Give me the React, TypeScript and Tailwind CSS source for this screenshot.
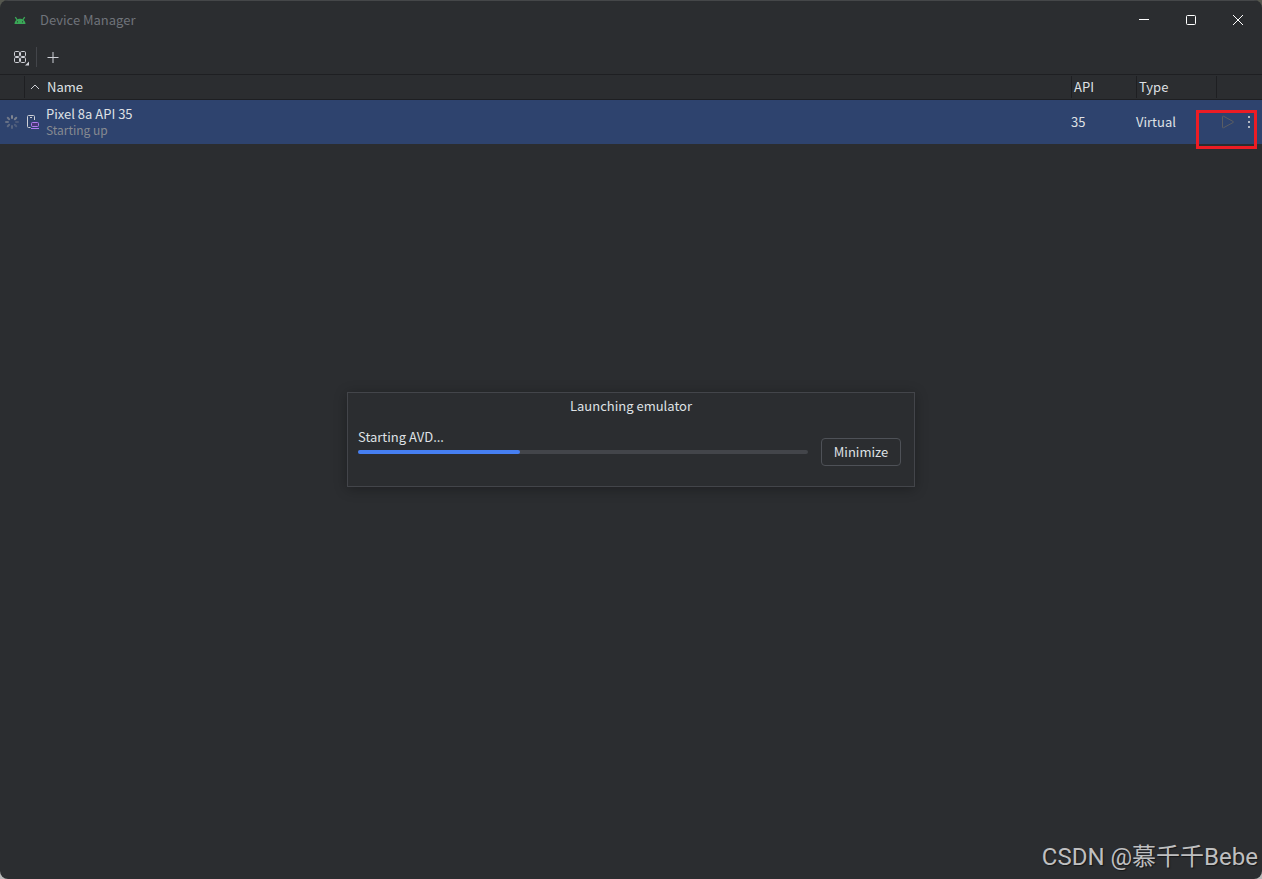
import { useState } from 'react';

const UI_FONT = "font-['Noto_Sans_CJK_SC','Noto_Sans',sans-serif]";

const devices = [{ name: 'Pixel 8a API 35', status: 'Starting up', api: '35', type: 'Virtual' }];

// --- Icons ---
const AndroidIcon = () => (
  <svg width="16" height="16" viewBox="0 0 16 16" aria-hidden="true">
    <path d="M2.500 12c.1-3 2.400-5.300 5.500-5.300s5.400 2.300 5.500 5.300z" fill="#3aa757" />
    <path d="M3.300 5.200l2 3M12.700 5.200l-2 3" stroke="#3aa757" strokeWidth="1.300" />
    <circle cx="5.500" cy="9.800" r=".6" fill="#2b2d30" />
    <circle cx="10.500" cy="9.800" r=".6" fill="#2b2d30" />
  </svg>
);

const GroupIcon = () => (
  <svg width="18" height="18" viewBox="0 0 18 18" fill="none" stroke="#ced0d6" aria-hidden="true">
    <rect x="2.500" y="3.500" width="5" height="5" rx="1.200" />
    <rect x="8.500" y="3.500" width="5" height="5" rx="1.200" />
    <rect x="2.500" y="9.500" width="5" height="5" rx="1.200" />
    <rect x="8.500" y="9.500" width="5" height="5" rx="1.200" />
    <path d="M17 13.500v4h-4z" fill="#ced0d6" stroke="none" />
  </svg>
);

const SpinnerIcon = () => (
  <svg width="16" height="16" viewBox="0 0 16 16" fill="#808590" aria-hidden="true">
    <rect x="7" y="1" width="2" height="4" rx="1" />
    <rect x="7" y="1" width="2" height="4" rx="1" opacity=".9" transform="rotate(45 8 8)" />
    <rect x="7" y="1" width="2" height="4" rx="1" opacity=".35" transform="rotate(90 8 8)" />
    <rect x="7" y="1" width="2" height="4" rx="1" opacity=".4" transform="rotate(135 8 8)" />
    <rect x="7" y="1" width="2" height="4" rx="1" opacity=".5" transform="rotate(180 8 8)" />
    <rect x="7" y="1" width="2" height="4" rx="1" opacity=".6" transform="rotate(225 8 8)" />
    <rect x="7" y="1" width="2" height="4" rx="1" opacity=".7" transform="rotate(270 8 8)" />
    <rect x="7" y="1" width="2" height="4" rx="1" opacity=".8" transform="rotate(315 8 8)" />
  </svg>
);

const PhoneIcon = () => (
  <svg width="16" height="16" viewBox="0 0 16 16" fill="none" aria-hidden="true">
    <path d="M4.500 13.500h-2a1 1 0 0 1-1-1v-10a1 1 0 0 1 1-1h5a1 1 0 0 1 1 1V6" stroke="#ced0d6" />
    <path d="M4 3.500h2" stroke="#ced0d6" />
    <rect x="5.500" y="8.500" width="7" height="4" rx="1" fill="#4a3a78" stroke="#b07af0" />
    <path d="M5 14.500h8" stroke="#b07af0" />
  </svg>
);

// --- Window ---
const TitleBar = () => (
  <header className="flex h-10 items-center border-t border-[#454749] pr-px pb-0.5">
    <div className="flex flex-1 items-center gap-3 pl-3">
      <AndroidIcon />
      <h1 className="text-[13px] leading-4 text-[#6f737a]">Device Manager</h1>
    </div>
    <button aria-label="Minimize window" className="flex h-full w-[47px] items-center justify-center">
      <svg width="10" height="10" viewBox="0 0 10 10" stroke="#fff"><path d="M0 4.500h10" /></svg>
    </button>
    <button aria-label="Maximize window" className="flex h-full w-[47px] items-center justify-center">
      <svg width="10" height="10" viewBox="0 0 10 10" stroke="#fff" fill="none"><rect x=".5" y=".5" width="9" height="9" rx="1" /></svg>
    </button>
    <button aria-label="Close window" className="flex h-full w-[47px] items-center justify-center">
      <svg width="10" height="10" viewBox="0 0 10 10" stroke="#fff"><path d="M0 0l10 10M10 0L0 10" /></svg>
    </button>
  </header>
);

const Toolbar = () => (
  <div className="flex h-[34px] items-center pl-3">
    <button aria-label="Group devices"><GroupIcon /></button>
    <div className="mx-1.5 h-5 w-px bg-[#43454a]" />
    <button aria-label="Add device" className="pl-0.5">
      <svg width="16" height="16" viewBox="0 0 16 16" stroke="#ced0d6"><path d="M8 3v11M2.500 8.500h11" /></svg>
    </button>
  </div>
);

const DeviceTable = () => (
  <table className="w-full table-fixed border-collapse text-left text-[13px] leading-4 text-[#dfe1e5]">
    <colgroup>
      <col className="w-6" />
      <col />
      <col className="w-[65px]" />
      <col className="w-20" />
      <col className="w-[46px]" />
    </colgroup>
    <thead className="border-y border-[#1e1f22]">
      <tr className="h-[25px]">
        <th aria-label="Status" className="p-0" />
        <th className="p-0 font-normal">
          <span className="flex h-[22px] items-center gap-1.5 border-l border-[#1e1f22] pl-1">
            <svg width="12" height="12" viewBox="0 0 12 12" fill="none" stroke="#ced0d6"><path d="M2 8l4-4 4 4" /></svg>
            Name
          </span>
        </th>
        <th className="p-0 font-normal">
          <span className="flex h-[22px] items-center border-l border-[#1e1f22] pl-0.5">API</span>
        </th>
        <th className="p-0 font-normal">
          <span className="flex h-[22px] items-center border-l border-[#1e1f22] pl-0.5">Type</span>
        </th>
        <th aria-label="Actions" className="p-0">
          <span className="flex h-[22px] border-l border-[#1e1f22]" />
        </th>
      </tr>
    </thead>
    <tbody>
      {devices.map(device => (
        <tr key={device.name} className="h-11 bg-[#2e436e]">
          <td className="pl-1"><SpinnerIcon /></td>
          <td>
            <div className="flex items-center gap-1 pl-0.5">
              <PhoneIcon />
              <div>
                <div>{device.name}</div>
                <div className="text-xs text-[#868a91]">{device.status}</div>
              </div>
            </div>
          </td>
          <td>{device.api}</td>
          <td>{device.type}</td>
          <td>
            <div className="flex items-center gap-2 pl-1">
              <button aria-label="Start device" disabled>
                <svg width="16" height="16" viewBox="0 0 16 16" fill="none" stroke="#5a5d63"><path d="M2.500 2.500v11a.5.5 0 0 0 .8.4l10-5.500a.5.5 0 0 0 0-.8l-10-5.500a.5.5 0 0 0-.8.4z" /></svg>
              </button>
              <button aria-label="More actions">
                <svg width="10" height="16" viewBox="0 0 10 16" fill="#b4b8c2"><path d="M4 2h2v2H4zM4 7h2v2H4zM4 12h2v2H4z" /></svg>
              </button>
            </div>
          </td>
        </tr>
      ))}
    </tbody>
  </table>
);

const LaunchDialog = ({ onMinimize }: { onMinimize: () => void }) => {
  const progress = 36;

  return (
    <div className="absolute inset-0 flex items-center justify-center">
      <div role="dialog" aria-labelledby="launch-title" className="w-[568px] border border-[#43454a] bg-[#2b2d30] px-2.5 pt-1 pb-5 text-[13px] leading-4 text-[#dfe1e5] shadow-[0_2px_12px_rgba(0,0,0,0.3)]">
        <h2 id="launch-title" className="text-center leading-[18px]">Launching emulator</h2>
        <div className="mt-3.5 flex items-end gap-[13px] pr-[3px]">
          <div className="flex-1 pb-3">
            <div id="launch-step" className="mb-[5px]">Starting AVD...</div>
            <div role="progressbar" aria-labelledby="launch-step" aria-valuenow={progress} className="h-1 rounded-sm bg-[#43454a]">
              <div className="h-1 rounded-sm bg-[#467ff2]" style={{ width: `${progress}%` }} />
            </div>
          </div>
          <button onClick={onMinimize} className="h-7 w-20 rounded border border-[#4e5157]">Minimize</button>
        </div>
      </div>
    </div>
  );
};

export default function App() {
  const [dialogOpen, setDialogOpen] = useState(true);

  return (
    <div className="bg-linear-to-b from-[#55574f] to-[#b8b8b8]">
      <main className={`relative min-h-screen overflow-hidden rounded-lg bg-[#2b2d30] ${UI_FONT}`}>
        <TitleBar />
        <Toolbar />
        <DeviceTable />
        {dialogOpen && <LaunchDialog onMinimize={() => setDialogOpen(false)} />}
        <div className="absolute top-[110px] right-[5px] h-[39px] w-[61px] border-3 border-[#ed1c24]" />
        <p className="absolute right-1 bottom-2 font-['Roboto','Noto_Sans_CJK_SC',sans-serif] text-2xl leading-7 text-[#bfbfc0] [text-shadow:1px_1px_1px_#00000080]">CSDN @慕千千Bebe</p>
      </main>
    </div>
  );
}
